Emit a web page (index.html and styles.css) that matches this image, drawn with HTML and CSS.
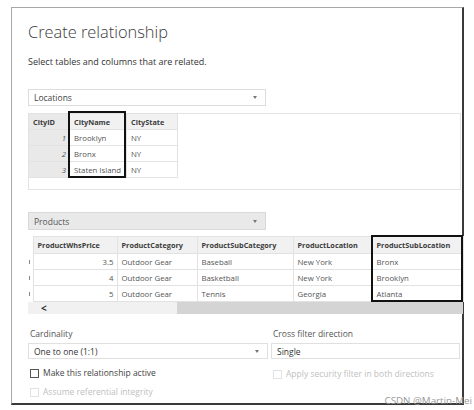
FILE: index.html
```
<!DOCTYPE html>
<html>
<head>
<meta charset="utf-8">
<link rel="stylesheet" href="styles.css">
</head>
<body>
<div class="dialog">
  <h1 class="title">Create relationship</h1>
  <p class="subtitle">Select tables and columns that are related.</p>

  <div class="select select-loc"><span class="sel-text">Locations</span><span class="arrow"></span></div>

  <div class="grid-box">
    <div class="table-wrap">
      <table class="tbl loc">
        <colgroup><col class="c-id"><col class="c-name"><col class="c-state"></colgroup>
        <thead>
          <tr><th class="idx-h">CityID</th><th>CityName</th><th>CityState</th></tr>
        </thead>
        <tbody>
          <tr><td class="idx">1</td><td>Brooklyn</td><td>NY</td></tr>
          <tr><td class="idx">2</td><td>Bronx</td><td>NY</td></tr>
          <tr><td class="idx">3</td><td>Staten Island</td><td>NY</td></tr>
        </tbody>
      </table>
      <div class="hl hl-city"></div>
    </div>
  </div>

  <div class="select select-prod"><span class="sel-text">Products</span><span class="arrow"></span></div>

  <div class="table-wrap prod-wrap">
    <table class="tbl prod">
      <colgroup><col class="p-stub"><col class="p-price"><col class="p-cat"><col class="p-sub"><col class="p-loc"><col class="p-subloc"></colgroup>
      <thead>
        <tr><th class="stub"></th><th>ProductWhsPrice</th><th>ProductCategory</th><th>ProductSubCategory</th><th>ProductLocation</th><th>ProductSubLocation</th></tr>
      </thead>
      <tbody>
        <tr><td class="stub"><span class="tick"></span></td><td class="num">3.5</td><td>Outdoor Gear</td><td>Baseball</td><td>New York</td><td>Bronx</td></tr>
        <tr><td class="stub"><span class="tick"></span></td><td class="num">4</td><td>Outdoor Gear</td><td>Basketball</td><td>New York</td><td>Brooklyn</td></tr>
        <tr><td class="stub"><span class="tick"></span></td><td class="num">5</td><td>Outdoor Gear</td><td>Tennis</td><td>Georgia</td><td>Atlanta</td></tr>
      </tbody>
    </table>
    <div class="hl hl-prod"></div>
  </div>
  <div class="scrollbar"><div class="sb-left"><span class="sb-arrow">&lt;</span></div><div class="sb-thumb"></div></div>

  <div class="options">
    <div class="opt-col opt-left">
      <div class="label">Cardinality</div>
      <div class="select select-opt"><span class="sel-text">One to one (1:1)</span><span class="arrow"></span></div>
      <div class="check check-active"><span class="box"></span><span>Make this relationship active</span></div>
      <div class="check check-ref disabled"><span class="box"></span><span>Assume referential integrity</span></div>
    </div>
    <div class="opt-col opt-right">
      <div class="label">Cross filter direction</div>
      <div class="select select-opt select-single"><span class="sel-text">Single</span></div>
      <div class="check check-sec disabled"><span class="box"></span><span>Apply security filter in both directions</span></div>
    </div>
  </div>
  <div class="watermark">CSDN @Martin-Mei</div>
</div>
</body>
</html>
```
FILE: styles.css
```
html, body {
  margin: 0;
  padding: 0;
  background: #ffffff;
}
body {
  font-family: "Open Sans", "Noto Sans", sans-serif;
  color: #444;
  width: 474px;
  height: 410px;
  overflow: hidden;
}
.dialog {
  position: relative;
  box-sizing: border-box;
  margin: 7px 0 0 11px;
  width: 453px;
  height: 398px;
  border-top: 1px solid #a8a8a8;
  border-left: 1px solid #a8a8a8;
  border-right: 2px solid #3a3a3a;
  border-bottom: 2px solid #3a3a3a;
  padding: 12px 0 0 16px;
  display: flex;
  flex-direction: column;
}
.title {
  margin: 0;
  font-weight: 300;
  font-size: 16.4px;
  line-height: 24px;
  height: 24px;
  color: #3c3c3c;
}
.subtitle {
  margin: 11px 0 0;
  font-size: 9px;
  line-height: 14px;
  color: #333;
}
.select {
  box-sizing: border-box;
  display: flex;
  align-items: center;
  justify-content: space-between;
  border: 1px solid #dcdcdc;
  background: #fff;
  font-size: 8.5px;
  color: #444;
  padding: 0 8px 0 5px;
}
.select-loc {
  margin-top: 20px;
  width: 238px;
  height: 17px;
}
.select-prod {
  margin-top: 22px;
  width: 238px;
  height: 18px;
  background: #e9e9e9;
  border-color: #d9d9d9;
  color: #555;
}
.arrow {
  width: 0;
  height: 0;
  border-left: 2.5px solid transparent;
  border-right: 2.5px solid transparent;
  border-top: 3px solid #777;
}
.grid-box {
  box-sizing: border-box;
  margin-top: 7px;
  width: 433px;
  height: 77px;
  border: 1px solid #e4e4e4;
}
.table-wrap {
  position: relative;
}
.tbl {
  border-collapse: collapse;
  table-layout: fixed;
  font-size: 7.8px;
  color: #555;
}
.tbl th, .tbl td {
  border: 1px solid #e2e2e2;
  padding: 0 4px;
  text-align: left;
  white-space: nowrap;
  overflow: hidden;
}
.tbl th {
  font-weight: 700;
  color: #3c3c3c;
  background: #f1f1f1;
  font-size: 7.3px;
}
.loc {
  width: 148px;
  margin-top: -1px;
  margin-left: -1px;
}
.loc th { height: 15px; }
.loc td { height: 15px; }
.c-id { width: 41px; }
.c-name { width: 57px; }
.c-state { width: 51px; }
.loc .idx-h { background: #e9e9e9; }
.loc .idx {
  background: #e9e9e9;
  text-align: right;
  font-style: italic;
  padding-right: 3px;
}
.hl {
  position: absolute;
  box-sizing: border-box;
  border: 2px solid #111;
  pointer-events: none;
}
.hl-city {
  left: 39px;
  top: -2px;
  width: 58px;
  height: 67px;
}
.prod-wrap {
  margin-top: 6px;
}
.prod {
  width: 435px;
}
.prod th { height: 16px; }
.prod td { height: 15px; }
.prod .stub {
  border-left: none;
  border-top: none;
  border-bottom: none;
  background: #fff;
  padding: 0;
  position: relative;
}
.tick {
  display: block;
  width: 1px;
  height: 4px;
  margin-left: 1px;
  background: #888;
}
.p-stub { width: 5px; }
.p-price { width: 84px; }
.p-cat { width: 80px; }
.p-sub { width: 96px; }
.p-loc { width: 79px; }
.p-subloc { width: 91px; }
.prod td.num { text-align: right; padding-right: 3px; }
.hl-prod {
  left: 343px;
  top: -1px;
  width: 92px;
  height: 67px;
}
.scrollbar {
  display: flex;
  width: 435px;
  height: 12px;
}
.sb-left {
  width: 149px;
  background: #f1f1f1;
  display: flex;
  align-items: center;
}
.sb-arrow {
  margin-left: 13px;
  font-size: 10px;
  font-weight: 700;
  line-height: 10px;
  color: #333;
  transform: scaleY(1.1);
}
.sb-thumb {
  flex: 1;
  background: #d4d4d4;
}
.options {
  display: flex;
  gap: 3px;
  margin-top: 13px;
}
.opt-col {
  display: flex;
  flex-direction: column;
}
.opt-left { width: 240px; }
.opt-right { width: 189px; }
.label {
  font-size: 8.5px;
  line-height: 14px;
  color: #555;
  padding-left: 2px;
}
.select-opt {
  margin-top: 2px;
  height: 16px;
  width: 100%;
  border-color: #e0e0e0;
  color: #333;
}
.check {
  display: flex;
  align-items: center;
  gap: 4px;
  font-size: 8.5px;
  line-height: 14px;
  color: #444;
  padding-left: 2px;
}
.check .box {
  box-sizing: border-box;
  width: 9px;
  height: 9px;
  border: 1px solid #555;
  background: #fff;
}
.check-active { margin-top: 7px; }
.check-ref { margin-top: 5px; }
.check-sec { margin-top: 8px; }
.check.disabled { color: #c0c0c0; }
.check.disabled .box { border-color: #e2e2e2; }
.watermark {
  position: absolute;
  right: -10px;
  bottom: -4px;
  font-size: 9.8px;
  line-height: 12px;
  color: #9a9a9a;
}
```
